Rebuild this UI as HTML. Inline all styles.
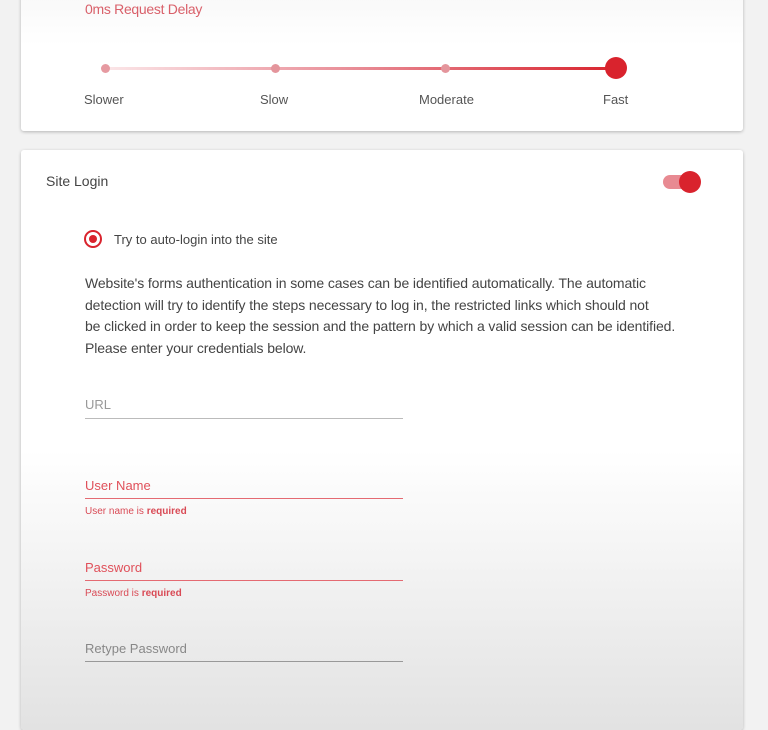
<!DOCTYPE html>
<html><head><style>
body{margin:0;width:768px;height:704px;overflow:hidden;background:#f2f2f2;font-family:"Liberation Sans",sans-serif;position:relative}
.card{position:absolute;left:21px;width:722px;background:#fff;border-radius:3px;box-shadow:0 1px 3px rgba(0,0,0,.25)}
.t{position:absolute;white-space:nowrap}
.lbl{font-size:13px;color:#555}
.line{position:absolute;left:85px;width:318px;height:1px}
</style></head><body>
<div class="card" style="top:-10px;height:141px;background:linear-gradient(#f8f8f8,#fff 40%)"></div>
<div class="t" style="left:85px;top:1px;font-size:14px;color:#d9606a;letter-spacing:-0.3px">0ms Request Delay</div>
<div style="position:absolute;left:106px;top:67px;width:510px;height:3px;background:linear-gradient(90deg,#fbe6e8,#e88a94 50%,#d9242e)"></div>
<div style="position:absolute;left:101px;top:64px;width:9px;height:9px;border-radius:50%;background:#e69aa1"></div>
<div style="position:absolute;left:271px;top:64px;width:9px;height:9px;border-radius:50%;background:#e4959c"></div>
<div style="position:absolute;left:441px;top:64px;width:9px;height:9px;border-radius:50%;background:#e4959c"></div>
<div style="position:absolute;left:605px;top:57px;width:22px;height:22px;border-radius:50%;background:#d9232d"></div>
<div class="t lbl" style="left:84px;top:92px">Slower</div>
<div class="t lbl" style="left:260px;top:92px">Slow</div>
<div class="t lbl" style="left:419px;top:92px">Moderate</div>
<div class="t lbl" style="left:603px;top:92px">Fast</div>

<div class="card" style="top:150px;height:580px;background:linear-gradient(#fff 0,#fff 300px,#e2e2e2 580px)"></div>
<div class="t" style="left:46px;top:173px;font-size:14px;color:#444">Site Login</div>
<div style="position:absolute;left:663px;top:175px;width:30px;height:14px;border-radius:7px;background:#e88a92"></div>
<div style="position:absolute;left:679px;top:171px;width:22px;height:22px;border-radius:50%;background:#d9232d"></div>
<div style="position:absolute;left:84px;top:230px;width:18px;height:18px;border-radius:50%;border:2px solid #d9232d;box-sizing:border-box"></div>
<div style="position:absolute;left:89px;top:235px;width:8px;height:8px;border-radius:50%;background:#d9232d"></div>
<div class="t" style="left:114px;top:232px;font-size:13px;color:#444">Try to auto-login into the site</div>
<div style="position:absolute;left:85px;top:273px;white-space:nowrap;font-size:14px;line-height:21.5px;color:#444;letter-spacing:-0.1px">Website's forms authentication in some cases can be identified automatically. The automatic<br>detection will try to identify the steps necessary to log in, the restricted links which should not<br>be clicked in order to keep the session and the pattern by which a valid session can be identified.<br>Please enter your credentials below.</div>
<div class="t lbl" style="left:85px;top:397px;color:#999">URL</div>
<div class="line" style="top:418px;background:#bbb"></div>
<div class="t" style="left:85px;top:478px;font-size:13px;color:#e0505a">User Name</div>
<div class="line" style="top:498px;background:#e46a72"></div>
<div class="t" style="left:85px;top:506px;font-size:10px;color:#d94a55">User name is <b>required</b></div>
<div class="t" style="left:85px;top:560px;font-size:13px;color:#e0505a">Password</div>
<div class="line" style="top:580px;background:#e46a72"></div>
<div class="t" style="left:85px;top:588px;font-size:10px;color:#d94a55">Password is <b>required</b></div>
<div class="t lbl" style="left:85px;top:641px;color:#888">Retype Password</div>
<div class="line" style="top:661px;background:#999"></div>
</body></html>
